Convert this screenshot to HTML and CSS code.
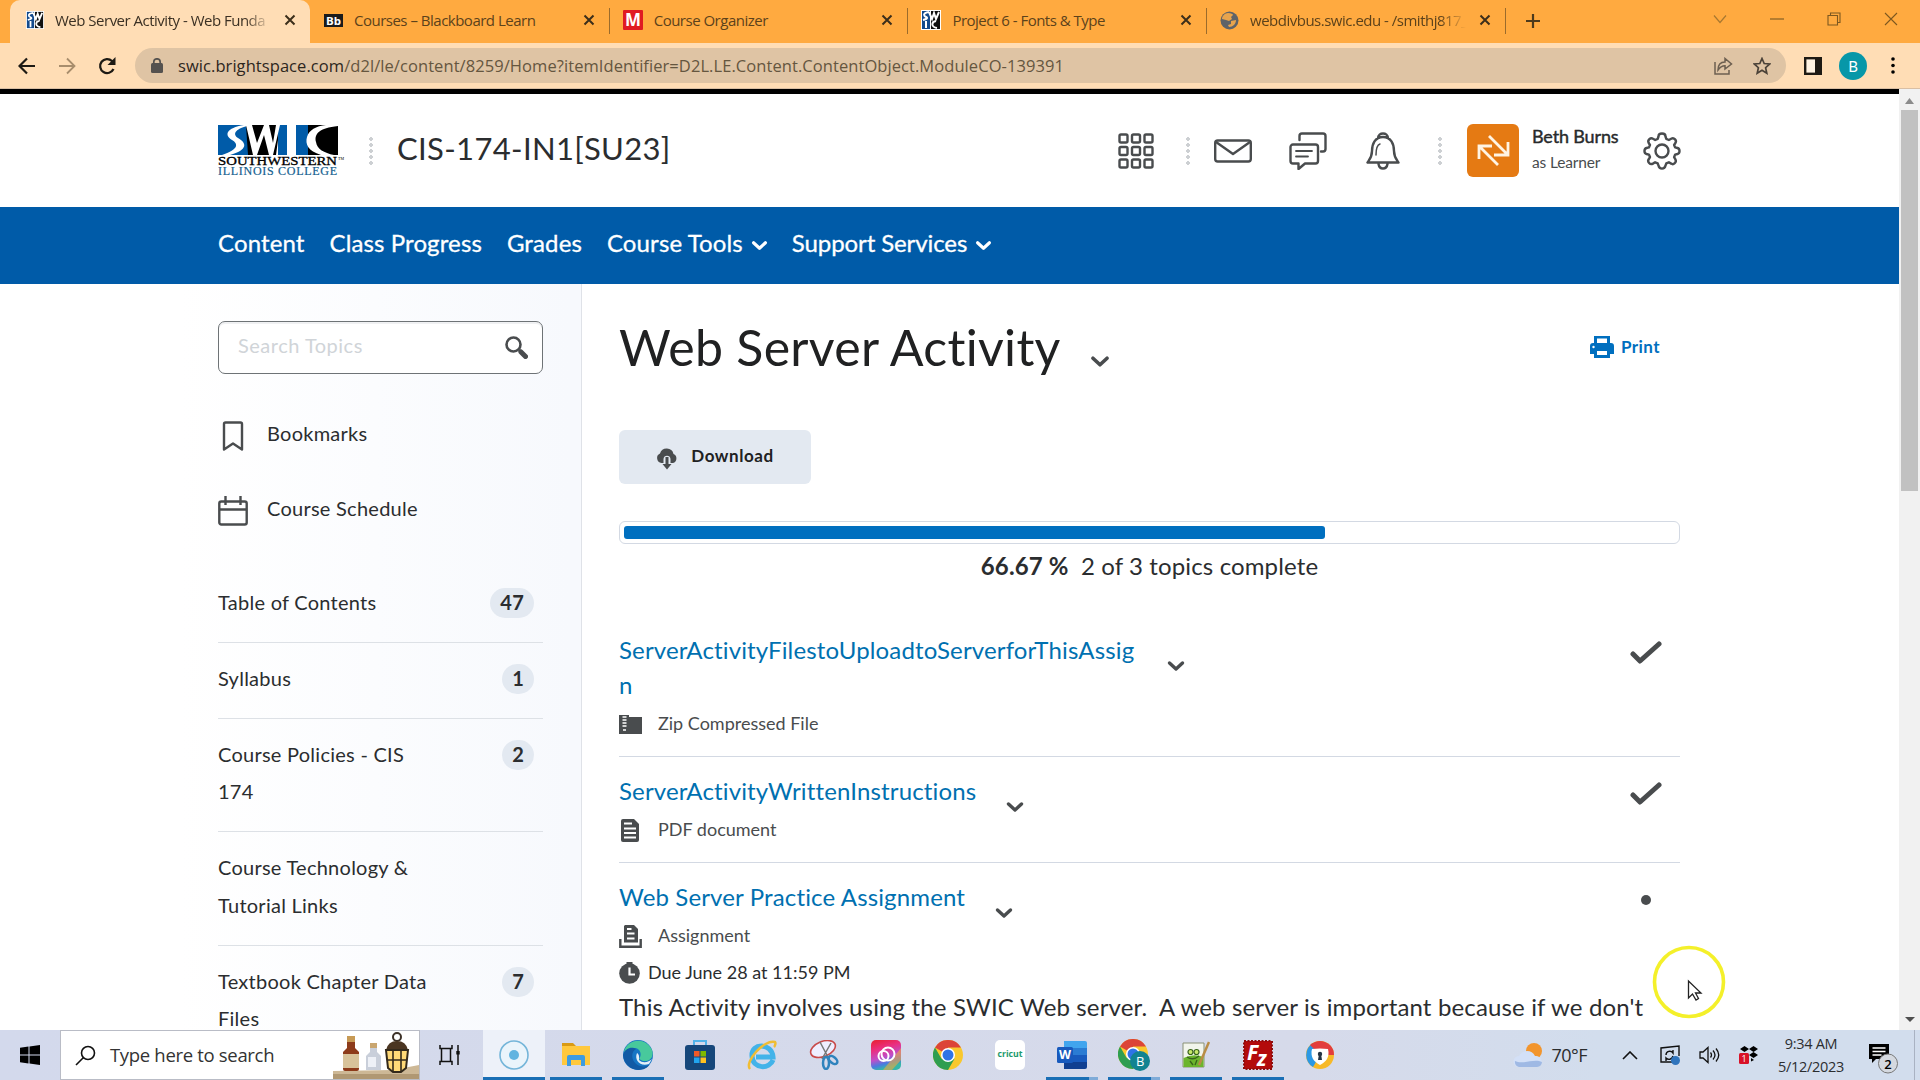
FILE: index.html
```html
<!DOCTYPE html>
<html lang="en">
<head>
    <meta charset="utf-8">
    <title>Web Server Activity - Web Fundamentals</title>
    <link rel="stylesheet" href="styles.css">
</head>
<body>

    <!-- shared shapes -->
    <svg class="defs" width="0" height="0">
        <symbol id="chev" viewBox="0 0 18 12"><path d="M2.5 3l6.500 6 6.500-6" fill="none" stroke="currentColor" stroke-width="3.400" stroke-linecap="round" stroke-linejoin="round"/></symbol>
        <symbol id="close" viewBox="0 0 12 12"><path d="M1.500 1.500l9 9M10.500 1.500l-9 9" stroke="currentColor" stroke-width="2"/></symbol>
        <symbol id="check" viewBox="0 0 32 24"><path d="M3 13l7 7L29 3" fill="none" stroke="#494c4e" stroke-width="5" stroke-linecap="round" stroke-linejoin="round"/></symbol>
        <symbol id="swicfav" viewBox="0 0 20 20">
            <rect width="20" height="20" fill="#fff"/>
            <path d="M1 1h8v18H1z" fill="#134a8c"/><path d="M10 1h9v18h-9z" fill="#111"/>
            <path d="M8 2C1 3 3 6 5 7s1 2-3 3M8 2l3 7 2-6 2 6 3-7M5 11v7M15 11c-5 1-5 6 1 7" fill="none" stroke="#fff" stroke-width="2"/>
        </symbol>
        <symbol id="chrome" viewBox="0 0 30 30">
            <circle cx="15" cy="15" r="15" fill="#f9c82d"/>
            <path d="M15 15L2 7.500A15 15 0 0 1 28 7.500H15z" fill="#dc4437"/>
            <path d="M15 15l6.500 3.750L15 30A15 15 0 0 1 2 7.500l6.500 11.250z" fill="#2e9e50"/>
            <circle cx="15" cy="15" r="7" fill="#fff"/><circle cx="15" cy="15" r="5.500" fill="#2f74e6"/>
        </symbol>
    </svg>

    <div class="tabstrip">
        <div class="tab active">
            <svg class="fav" width="18" height="20"><use href="#swicfav"/></svg>
            <span class="tab-title fade">Web Server Activity - Web Funda</span>
            <svg class="tab-x" width="12" height="12"><use href="#close"/></svg>
        </div>
        <div class="tab">
            <svg class="fav" width="19" height="13" viewBox="0 0 19 13"><rect width="19" height="13" fill="#1b1b1b"/><text x="2" y="10.500" font-size="11" font-weight="bold" fill="#fff" textLength="15" lengthAdjust="spacingAndGlyphs">Bb</text></svg>
            <span class="tab-title">Courses – Blackboard Learn</span>
            <svg class="tab-x" width="12" height="12"><use href="#close"/></svg>
        </div>
        <div class="tab">
            <svg class="fav" width="20" height="20" viewBox="0 0 20 20"><rect width="20" height="20" rx="1" fill="#e01b22"/><text x="2" y="16" font-size="17" font-weight="bold" fill="#fff" textLength="16" lengthAdjust="spacingAndGlyphs">M</text></svg>
            <span class="tab-title">Course Organizer</span>
            <svg class="tab-x" width="12" height="12"><use href="#close"/></svg>
        </div>
        <div class="tab">
            <svg class="fav" width="20" height="20"><use href="#swicfav"/></svg>
            <span class="tab-title">Project 6 - Fonts &amp; Type</span>
            <svg class="tab-x" width="12" height="12"><use href="#close"/></svg>
        </div>
        <div class="tab">
            <svg class="fav" width="19" height="19" viewBox="0 0 19 19"><circle cx="9.500" cy="9.500" r="9" fill="#5f6368"/><path d="M8 2c3 0 5 1 5 2l-2 2 1 2-3 2-3-1-4-1c0-3 3-6 6-6zM11 10l5-1c0 4-3 7-7 7l-1-2 3-1z" fill="#e8a44d"/></svg>
            <span class="tab-title fade">webdivbus.swic.edu - /smithj817_</span>
            <svg class="tab-x" width="12" height="12"><use href="#close"/></svg>
        </div>
        <svg class="new-tab" width="14" height="14" viewBox="0 0 14 14"><path d="M7 0v14M0 7h14" stroke="#4d3a1c" stroke-width="2.200"/></svg>
        <div class="win-controls">
            <svg width="14" height="10" viewBox="0 0 14 10"><path d="M1 1.500l6 7 6-7" fill="none" stroke="#a87830" stroke-width="1.200"/></svg>
            <svg width="14" height="10" viewBox="0 0 14 10"><path d="M0 5h14" stroke="#8d6528" stroke-width="1.300"/></svg>
            <svg width="14" height="14" viewBox="0 0 14 14"><path d="M1 3.500h9.500V13H1zM3.500 3.500V1H13v9.500h-2.500" fill="none" stroke="#7d5820" stroke-width="1.100"/></svg>
            <svg width="14" height="14" viewBox="0 0 14 14"><path d="M1 1l12 12M13 1L1 13" stroke="#7d5820" stroke-width="1.100"/></svg>
        </div>
    </div>

    <div class="toolbar">
        <svg width="18" height="18" viewBox="0 0 18 18"><path d="M17 9H2M9 1.500L1.500 9 9 16.500" fill="none" stroke="#1e1a14" stroke-width="2.200"/></svg>
        <svg width="18" height="18" viewBox="0 0 18 18"><path d="M1 9h15M9 1.500L16.500 9 9 16.500" fill="none" stroke="#a88d6c" stroke-width="1.800"/></svg>
        <svg width="18" height="18" viewBox="0 0 18 18"><path d="M15.500 12A7 7 0 1 1 14 4l2 2" fill="none" stroke="#1e1a14" stroke-width="2.300"/><path d="M17.500 0v8h-8z" fill="#1e1a14"/></svg>
        <div class="omnibox">
            <svg width="12" height="15" viewBox="0 0 12 15"><rect y="5" width="12" height="10" rx="1.500" fill="#55524f"/><path d="M2.800 6V4a3.200 3.200 0 0 1 6.400 0v2" fill="none" stroke="#55524f" stroke-width="1.700"/></svg>
            <span class="url"><b>swic.brightspace.com</b>/d2l/le/content/8259/Home?itemIdentifier=D2L.LE.Content.ContentObject.ModuleCO-139391</span>
            <svg class="share" width="20" height="18" viewBox="0 0 20 18"><path d="M2 5v12h14v-4M5 13c0-6 3-8 7-8V1.500L18.500 7 12 12V8.800C9 8.800 7 10 5 13z" fill="none" stroke="#6d5f50" stroke-width="1.500"/></svg>
            <svg width="18" height="18" viewBox="0 0 18 18"><path d="M9 1.500l2.200 5 5.500.5-4.100 3.700 1.200 5.500L9 13.300l-4.800 2.900 1.200-5.500L1.300 7l5.500-.5z" fill="none" stroke="#4b4238" stroke-width="1.700"/></svg>
        </div>
        <svg class="panel" width="18" height="18" viewBox="0 0 18 18"><rect x="1.200" y="1.200" width="15.600" height="15.600" fill="#fff3e3" stroke="#1e1a14" stroke-width="2.400"/><path d="M11 1h6v16h-6z" fill="#1e1a14"/></svg>
        <span class="profile">B</span>
        <svg class="kebab" width="4" height="17" viewBox="0 0 4 17"><circle cx="2" cy="2" r="1.800"/><circle cx="2" cy="8.500" r="1.800"/><circle cx="2" cy="15" r="1.800"/></svg>
    </div>

    <div class="viewport">
        <div class="page">
            <div class="topline"></div>
            <header class="site-header">
                <svg class="logo" width="128" height="52" viewBox="0 0 128 52">
                    <path d="M0 0h28l12 30H0z" fill="#005ba8"/>
                    <path d="M28 0h34l-4 30H30zM90 0h30v30H90z"/>
                    <path d="M60 0h9v30H60zM78 0h12v30H78z" fill="#005ba8"/>
                    <path d="M69 0h9v30h-9z" fill="#fff"/>
                    <path d="M26 0C8 3 6 10 14 15c7 4 6 10-10 15h8c18-5 17-12 8-17-6-4-3-10 14-13z" fill="#fff"/>
                    <path d="M28 0h6l5 18L46 0h5l4 18 3-18h4l-7 30h-4l-5-20-7 20h-4z" fill="#fff"/>
                    <path d="M120 1C101 3 96 9 98 17c1 7 8 11 18 13h-13C90 26 87 19 89 12 91 5 98 1 108 0h12z" fill="#fff"/>
                    <text x="0" y="39.500" font-size="12" class="serif" stroke="#000" stroke-width=".3" textLength="119" lengthAdjust="spacingAndGlyphs">SOUTHWESTERN</text>
                    <text x="120" y="34.500" font-size="4" class="serif">TM</text>
                    <text x="0" y="50" font-size="12" class="serif" fill="#14608f" stroke="#14608f" stroke-width=".2" textLength="119">ILLINOIS COLLEGE</text>
                </svg>
                <span class="dots d1"></span>
                <span class="course">CIS-174-IN1[SU23]</span>
                <div class="header-icons">
                    <svg class="i-grid" width="36" height="36" viewBox="0 0 36 36" fill="none" stroke="#494c4e" stroke-width="2.400">
                        <rect x="1.500" y="1.500" width="8" height="8" rx="1.500"/><rect x="14" y="1.500" width="8" height="8" rx="1.500"/><rect x="26.500" y="1.500" width="8" height="8" rx="1.500"/>
                        <rect x="1.500" y="14" width="8" height="8" rx="1.500"/><rect x="14" y="14" width="8" height="8" rx="1.500"/><rect x="26.500" y="14" width="8" height="8" rx="1.500"/>
                        <rect x="1.500" y="26.500" width="8" height="8" rx="1.500"/><rect x="14" y="26.500" width="8" height="8" rx="1.500"/><rect x="26.500" y="26.500" width="8" height="8" rx="1.500"/>
                    </svg>
                    <span class="dots d2"></span>
                    <svg class="i-mail" width="38" height="24" viewBox="0 0 38 24" fill="none" stroke="#494c4e" stroke-width="2.400" stroke-linejoin="round"><rect x="1.200" y="1.500" width="35.600" height="21" rx="2.500"/><path d="M2 3l17 12L36 3"/></svg>
                    <svg class="i-chat" width="38" height="38" viewBox="0 0 38 38" fill="none" stroke="#494c4e" stroke-width="2.400" stroke-linejoin="round" stroke-linecap="round"><path d="M10.500 8V4a2.500 2.500 0 0 1 2.500-2.500h21A2.500 2.500 0 0 1 36.500 4v13a2.500 2.500 0 0 1-2.500 2.500h-2"/><path d="M4 12.500h22.500A2.500 2.500 0 0 1 29 15v14a2.500 2.500 0 0 1-2.500 2.500H16L9.500 37v-5.500H4A2.500 2.500 0 0 1 1.500 29V15A2.500 2.500 0 0 1 4 12.500z"/><path d="M7 19h16M7 24.500h12" stroke-width="1.800"/></svg>
                    <svg class="i-bell" width="34" height="38" viewBox="0 0 34 38" fill="none" stroke="#494c4e" stroke-width="2.400" stroke-linejoin="round" stroke-linecap="round"><path d="M12 6c0-6 10-6 10 0M17 5C9 5 6 12 6 19c0 6-2 8-4.500 11.500h31C30 27 28 25 28 19c0-7-3-14-11-14zM12.500 32c1 6 8 6 9 0"/><path d="M14 12c-3 1-4 6-4 11" stroke-width="1.500"/></svg>
                    <span class="dots d3"></span>
                    <svg class="avatar" width="52" height="53" viewBox="0 0 52 53"><rect width="52" height="53" rx="6" fill="#e57a13"/><path d="M22 12l19 19M41 18v13H27M31 41L12 22M12 35V22h13" fill="none" stroke="#fff4e4" stroke-width="2.800"/></svg>
                    <div class="user"><span class="user-name">Beth Burns</span><span class="user-role">as Learner</span></div>
                    <svg class="i-gear" width="38" height="38" viewBox="0 0 38 38" fill="none" stroke="#494c4e" stroke-width="2.400" stroke-linejoin="round"><path d="M15.500 4.500Q15.500 1.500 19 1.500t3.500 3l.8 2.400 2.600 1.100 2.300-1.300c3-1.600 5.900 1.900 4.200 4.300L31.100 13l1 2.400 2.400.6c2.700.8 2.700 5.200 0 6l-2.400.6-1 2.600 1.300 2.200c1.600 2.900-1.900 5.900-4.300 4.200l-2.200-1.300-2.600 1.100-.8 2.200q-.6 3-3.500 3t-3.500-3l-.8-2.200-2.600-1.100-2.200 1.300c-2.900 1.600-5.900-1.900-4.200-4.300l1.300-2.200-1.100-2.500-2.400-.6c-2.700-.8-2.700-5.200 0-6l2.400-.6L7 13l-1.300-2c-1.600-2.900 1.900-5.900 4.300-4.300L12.200 8l2.500-1.100z"/><circle cx="19" cy="19" r="6.500"/></svg>
                </div>
            </header>

            <nav class="navbar">
                <a>Content</a>
                <a>Class Progress</a>
                <a>Grades</a>
                <a>Course Tools <svg width="17" height="11"><use href="#chev"/></svg></a>
                <a class="support">Support Services <svg width="17" height="11"><use href="#chev"/></svg></a>
            </nav>

            <div class="columns">
                <aside class="sidebar">
                    <div class="search">
                        <span>Search Topics</span>
                        <svg width="23" height="23" viewBox="0 0 23 23" fill="none" stroke="#494c4e"><circle cx="8.500" cy="8.500" r="7" stroke-width="2.600"/><path d="M14 14l2 2" stroke-width="3"/><path d="M16 16l4.500 4.500" stroke-width="5" stroke-linecap="round"/></svg>
                    </div>
                    <div class="side-link">
                        <svg width="30" height="30" viewBox="0 0 30 30" fill="none" stroke="#494c4e" stroke-width="2.400" stroke-linejoin="round"><path d="M6 3q0-1.500 1.500-1.500h15Q24 1.500 24 3v25.500l-9-6-9 6z"/></svg>
                        <span>Bookmarks</span>
                    </div>
                    <div class="side-link">
                        <svg width="30" height="30" viewBox="0 0 30 30" fill="none" stroke="#494c4e" stroke-width="2.400" stroke-linejoin="round"><rect x="1.300" y="5.500" width="27.400" height="23" rx="2"/><path d="M1 13.500h28M7.500 0v9M22.500 0v9"/></svg>
                        <span>Course Schedule</span>
                    </div>
                    <ul class="toc">
                        <li><span>Table of Contents</span><b>47</b></li>
                        <li><span>Syllabus</span><b>1</b></li>
                        <li><span>Course Policies - CIS<br>174</span><b>2</b></li>
                        <li><span>Course Technology &amp;<br>Tutorial Links</span></li>
                        <li><span>Textbook Chapter Data<br>Files</span><b>7</b></li>
                    </ul>
                </aside>

                <main class="content">
                    <div class="title-row">
                        <h1>Web Server Activity</h1>
                        <svg class="title-chev" width="20" height="13"><use href="#chev"/></svg>
                        <a class="print">
                            <svg width="24" height="22" viewBox="0 0 24 22"><path d="M4 0h16v8H4z" fill="#006fbf"/><path d="M7 2.500h10v5H7z" fill="#fff"/><path d="M3 7h18a3 3 0 0 1 3 3v8h-4v4H4v-4H0v-8a3 3 0 0 1 3-3z" fill="#006fbf"/><path d="M7 15h10v4H7z" fill="#fff"/><circle cx="3.500" cy="11" r="1.200" fill="#fff"/></svg>
                            <span>Print</span>
                        </a>
                    </div>
                    <button class="download">
                        <svg width="22" height="22" viewBox="0 0 22 22"><path d="M5.500 15A5 5 0 0 1 4 5.500 7 7 0 0 1 17.500 6 4.800 4.800 0 0 1 17 15z" fill="#494c4e"/><path d="M7.500 16V11c0-4.500 7-4.500 7 0v5" fill="#e3e9f1"/><path d="M11 9v9" stroke="#494c4e" stroke-width="3"/><path d="M6.500 16h9L11 21.500z" fill="#494c4e"/></svg>
                        <span>Download</span>
                    </button>
                    <div class="progress"><div class="progress-fill" style="width:66.67%"></div></div>
                    <p class="progress-text"><b>66.67 %</b> <span>2 of 3 topics complete</span></p>

                    <section class="topic">
                        <div class="topic-head">
                            <a>ServerActivityFilestoUploadtoServerforThisAssign</a>
                            <svg class="topic-chev" width="18" height="12"><use href="#chev"/></svg>
                            <svg class="done" width="32" height="24"><use href="#check"/></svg>
                        </div>
                        <div class="kind">
                            <svg width="23" height="19" viewBox="0 0 23 19"><path d="M0 0h10v2h13v17H0z" fill="#494c4e"/><path d="M3.500 2h4M3.500 5h4M3.500 8h4M3.500 11h4M4 15h3" stroke="#fff" stroke-width="1.600"/></svg>
                            <span>Zip Compressed File</span>
                        </div>
                    </section>
                    <section class="topic">
                        <div class="topic-head">
                            <a>ServerActivityWrittenInstructions</a>
                            <svg class="topic-chev" width="18" height="12"><use href="#chev"/></svg>
                            <svg class="done" width="32" height="24"><use href="#check"/></svg>
                        </div>
                        <div class="kind">
                            <svg width="23" height="23" viewBox="0 0 23 23"><path d="M4 0h11l5 5v16q0 2-2 2H4q-2 0-2-2V2q0-2 2-2z" fill="#494c4e"/><path d="M5 4.500h8M5 9.500h12M5 14h12M5 18.500h12" stroke="#fff" stroke-width="2"/></svg>
                            <span>PDF document</span>
                        </div>
                    </section>
                    <section class="topic">
                        <div class="topic-head">
                            <a>Web Server Practice Assignment</a>
                            <svg class="topic-chev" width="18" height="12"><use href="#chev"/></svg>
                            <svg class="done" width="32" height="24" viewBox="0 0 32 24"><circle cx="16" cy="12" r="5" fill="#494c4e"/></svg>
                        </div>
                        <div class="kind">
                            <svg width="23" height="23" viewBox="0 0 23 23"><path d="M1.300 14v7.700h20.400V14" fill="none" stroke="#494c4e" stroke-width="2.400"/><path d="M6 0h9l4 4v13.500H5V1z" fill="#494c4e"/><path d="M8 4h4.500M8 8.500h7.500M8 13.500h7.500" stroke="#fff" stroke-width="2.200"/></svg>
                            <span>Assignment</span>
                        </div>
                        <div class="due">
                            <svg width="21" height="22" viewBox="0 0 21 22"><circle cx="10.500" cy="11.500" r="10.300" fill="#494c4e"/><path d="M7.500 0h6v4h-6z" fill="#494c4e"/><path d="M10.500 5.500v7H16" fill="none" stroke="#fff" stroke-width="2.200"/></svg>
                            <span>Due June 28 at 11:59 PM</span>
                        </div>
                        <p class="desc">This Activity involves using the SWIC Web server.&nbsp; A web server is important because if we don't</p>
                    </section>
                </main>
            </div>
        </div>

        <div class="scrollbar">
            <svg width="9" height="6" viewBox="0 0 9 6"><path d="M0 6l4.500-6L9 6z" fill="#8b8b8b"/></svg>
            <div class="thumb"></div>
            <svg class="down" width="10" height="5" viewBox="0 0 10 5"><path d="M0 0h10L5 5z" fill="#505050"/></svg>
        </div>
    </div>

    <div class="taskbar">
        <div class="start"><svg width="20" height="20" viewBox="0 0 20 20"><path d="M0 2.800L8.500 1.600v8H0zM9.500 1.400L20 0v9.600H9.500zM0 10.400h8.500v8L0 17.200zM9.500 10.400H20V20L9.500 18.600z"/></svg></div>
        <div class="tb-search">
            <svg class="glass" width="21" height="21" viewBox="0 0 21 21"><circle cx="13" cy="8" r="6.500" fill="none" stroke="#111" stroke-width="1.600"/><path d="M8.500 12.500L1 20" stroke="#111" stroke-width="1.600"/></svg>
            <span>Type here to search</span>
            <svg class="deco" width="86" height="48" viewBox="0 0 86 48">
                <path d="M0 40l60-1 26-5v14H0z" fill="#cdb896"/><path d="M0 43h86v5H0z" fill="#b09873"/>
                <rect x="14" y="5" width="8" height="7" fill="#c79a55"/><path d="M14 11h8v6l4 4v17q0 2-2 2H12q-2 0-2-2V21l4-4z" fill="#8d3b1a"/><path d="M10 23h16v14H10z" fill="#d8c39a"/>
                <rect x="37" y="12" width="7" height="5" fill="#c9a670"/><path d="M37 17h7v4l4 4v14H33V25l4-4z" fill="#c9cfda"/><path d="M35 26h8v10h-8z" fill="#eef1f7"/>
                <circle cx="64" cy="6" r="4" fill="none" stroke="#3c3127" stroke-width="2"/><path d="M53 19q2-9 11-9t11 9z" fill="#4a3521"/><path d="M53 19h22l-2 18-5 4h-8l-5-4z" fill="#ffd977" stroke="#33291b" stroke-width="2"/><path d="M60 19v22M68 19v22M54 29h20" stroke="#33291b" stroke-width="1.600"/>
            </svg>
        </div>
        <div class="app taskview"><svg width="21" height="20" viewBox="0 0 21 20" fill="none" stroke="#111" stroke-width="1.500"><path d="M1 0v3.500h12V0M1 20v-3.500h12V20M2.500 3.500v13M11.500 3.500v13M19 0v20"/><path d="M17.300 6h3.400v3.500h-3.400z" fill="#111" stroke="none"/></svg></div>
        <div class="app current on"><svg width="30" height="30" viewBox="0 0 30 30"><circle cx="15" cy="15" r="14" fill="#eaf4fb" stroke="#74b5d9" stroke-width="1.600"/><circle cx="15" cy="15" r="5" fill="#62b4e0"/></svg></div>
        <div class="app on"><svg width="28" height="24" viewBox="0 0 28 24"><path d="M0 0h11l3 3h-14z" fill="#d99a14"/><path d="M0 3h28v19H0z" fill="#ffc83d"/><path d="M5 23v-9q0-2 2-2h14q2 0 2 2v9h-4v-6h-10v6z" fill="#3d9be0"/></svg></div>
        <div class="app on"><svg width="30" height="30" viewBox="0 0 30 30"><circle cx="15" cy="15" r="15" fill="#1675c4"/><path d="M1 12C3 0 22-5 29 10c2 6-1 12-9 11l-4-2c3-4 2-10-4-11-5 0-9 2-11 4z" fill="#48c99c"/><path d="M0 15C2 8 9 6 13 9c-6 3-5 14 4 17 4 1 8 0 10-2-7 11-26 6-27-9z" fill="#125aa5"/><path d="M14 13c3 2 2 6 2 7 4 4 10 2 13-1l-3 5c-9 3-15-4-12-11z" fill="#e3eef8"/></svg></div>
        <div class="app"><svg width="30" height="30" viewBox="0 0 30 30"><path d="M9 6V1h12v5" fill="none" stroke="#52b4ea" stroke-width="2"/><rect y="5" width="30" height="25" rx="3" fill="#16477a"/><path d="M9 11h5.500v5.500H9z" fill="#f05a28"/><path d="M15.500 11H21v5.500h-5.500z" fill="#7fba00"/><path d="M9 17.500h5.500V23H9z" fill="#22a5ef"/><path d="M15.500 17.500H21V23h-5.500z" fill="#ffc220"/></svg></div>
        <div class="app"><svg width="30" height="30" viewBox="0 0 30 30"><path d="M26 20c-3 9-20 10-21-4S25 3 26 17H9" fill="none" stroke="#43b3e9" stroke-width="5"/><path d="M3 29C-3 22 17-1 28 2c1 1 0 4-1 5" fill="none" stroke="#f0bd33" stroke-width="2.500"/></svg></div>
        <div class="app"><svg width="30" height="30" viewBox="0 0 30 30" fill="none"><ellipse cx="14" cy="9" rx="13" ry="7.500" transform="rotate(-22 14 9)" fill="#eef" stroke="#c94a4a" stroke-width="1.600"/><path d="M11 2l9 17M22 3L13 19" stroke="#777" stroke-width="1.500"/><ellipse cx="17" cy="23" rx="3" ry="6" stroke="#2f83bd" stroke-width="2.500"/><ellipse cx="24" cy="20" rx="3" ry="5" transform="rotate(-50 24 20)" stroke="#2f83bd" stroke-width="2.500"/></svg></div>
        <div class="app"><svg width="30" height="30" viewBox="0 0 30 30"><defs><linearGradient id="cc" x1="0" y1="0" x2=".3" y2="1"><stop offset="0" stop-color="#e8202d"/><stop offset=".35" stop-color="#ea2f80"/><stop offset=".65" stop-color="#c04fc8"/><stop offset=".85" stop-color="#4a7be0"/><stop offset="1" stop-color="#35b6a8"/></linearGradient></defs><rect width="30" height="30" rx="5" fill="url(#cc)"/><path d="M30 8v12l-9 10h-9z" fill="#f0a840" opacity=".6"/><circle cx="12.500" cy="16" r="5" fill="none" stroke="#fff" stroke-width="2"/><circle cx="17" cy="14" r="6.500" fill="none" stroke="#fff" stroke-width="2"/></svg></div>
        <div class="app"><svg width="30" height="30"><use href="#chrome"/></svg></div>
        <div class="app"><svg width="30" height="30" viewBox="0 0 30 30"><rect width="30" height="30" rx="5" fill="#fff"/><text x="2.500" y="17" font-size="9" font-weight="bold" fill="#1b9a6c" textLength="25" lengthAdjust="spacingAndGlyphs">cricut</text></svg></div>
        <div class="app on many"><svg width="30" height="28" viewBox="0 0 30 28"><path d="M7 0h21q2 0 2 2v5H7z" fill="#41a5ee"/><path d="M7 7h23v7H7z" fill="#2b7cd3"/><path d="M7 14h23v7H7z" fill="#185abd"/><path d="M7 21h23v5q0 2-2 2H7z" fill="#103f91"/><rect y="6" width="16" height="16" rx="1.500" fill="#185abd"/><text x="2" y="18" font-size="12" font-weight="bold" fill="#fff" textLength="12" lengthAdjust="spacingAndGlyphs">W</text></svg></div>
        <div class="app on many"><svg width="32" height="32" viewBox="0 0 32 32"><use href="#chrome" width="30" height="30"/><circle cx="22" cy="22" r="10" fill="#128391"/><text x="18" y="27" font-size="13" fill="#fff">B</text></svg></div>
        <div class="app on"><svg width="28" height="28" viewBox="0 0 28 28"><path d="M1 2h21v24H1z" fill="#f2f5ec" stroke="#8a9277"/><path d="M1.500 17q10-5 20-1v10h-20z" fill="#6cb52d"/><circle cx="8.500" cy="11" r="2.500" fill="#c9e86a" stroke="#39631c" stroke-width="1.200"/><circle cx="14.500" cy="11" r="2.500" fill="#c9e86a" stroke="#39631c" stroke-width="1.200"/><path d="M5 16q6 4 12-1M8 20l3 4M15 19l-2 5" fill="none" stroke="#39631c" stroke-width="1.300"/><path d="M27 1L17 24" stroke="#b98d45" stroke-width="2.500"/></svg></div>
        <div class="app on"><svg width="30" height="30" viewBox="0 0 30 30"><rect x="1" y="1" width="28" height="28" fill="#b30b0b" stroke="#8e0d0d" stroke-width="2" stroke-dasharray="2 1.500"/><text x="4" y="20" font-size="21" font-weight="bold" font-style="italic" fill="#fff">F</text><text x="14" y="26" font-size="21" font-weight="bold" font-style="italic" fill="#fff">z</text></svg></div>
        <div class="app"><svg width="28" height="28" viewBox="0 0 28 28"><circle cx="14" cy="14" r="14" fill="#f7b928"/><path d="M14 14L7 26A14 14 0 0 1 7 2z" fill="#2b98e5"/><path d="M14 14L4 4Q14-4 24 4q4 4 4 10z" fill="#e23d3d"/><path d="M6 8q8-1 16 0c2 8-2 13-8 16-6-3-10-8-8-16z" fill="#fff"/><circle cx="14" cy="13" r="2.200" fill="#234"/><path d="M13 13h2l1 6h-4z" fill="#234"/></svg></div>

        <div class="tray">
            <svg class="weather" width="30" height="25" viewBox="0 0 30 25"><circle cx="21" cy="8" r="8" fill="#f2952d"/><path d="M6 24a5.500 5.500 0 0 1 0-11 9 9 0 0 1 16 0 5.500 5.500 0 0 1 2 11z" fill="#d3e0f7"/><path d="M6 24a5.500 5.500 0 0 1-4-6c8 4 19-3 27 1a5.500 5.500 0 0 1-5 5z" fill="#9fb9e4"/></svg>
            <span class="temp">70°F</span>
            <svg class="up" width="16" height="9" viewBox="0 0 16 9"><path d="M1 8l7-7 7 7" fill="none" stroke="#111" stroke-width="1.600"/></svg>
            <svg class="sync" width="20" height="20" viewBox="0 0 20 20"><path d="M19 11V1L1 3v14h11" fill="none" stroke="#111" stroke-width="1.400"/><path d="M6 10c0-4 5-5 7-2V5M13 11c-1 4-5 4-7 2v3" fill="none" stroke="#111" stroke-width="1.400"/><circle cx="15.500" cy="15.500" r="4.500" fill="#2f74bd"/></svg>
            <svg class="sound" width="21" height="18" viewBox="0 0 21 18" fill="none" stroke="#111" stroke-width="1.300"><path d="M1 6v6h3l5 4.500V1.500L4 6zM11.500 6.500q2 2.500 0 5M14 4.500q4 4.500 0 9M17 2.500q5.500 6.500 0 13"/></svg>
            <svg class="dropbox" width="20" height="18" viewBox="0 0 20 18"><path d="M5.500 0l4.500 3-4.500 3L1 3zM14.500 0L19 3l-4.500 3L10 3zM14.500 6L19 9l-4.500 3L10 9zM12 12l3 2-3 1.500z"/><rect y="7" width="10" height="11" rx="1.500" fill="#d81228"/><text x="2.500" y="16" font-size="9" fill="#fff">1</text></svg>
            <div class="clock"><span>9:34 AM</span><span>5/12/2023</span></div>
            <svg class="notif" width="32" height="32" viewBox="0 0 32 32"><path d="M1 1h20v15H8l-4 4v-4H1z"/><path d="M4.500 5h13M4.500 8.500h13M4.500 12h9" stroke="#fff" stroke-width="1.300"/><circle cx="20" cy="20.500" r="9.500" fill="#d5d9e0" stroke="#777" stroke-width="1"/><text x="16.200" y="25.500" font-size="13" font-weight="600">2</text></svg>
            <span class="peek"></span>
        </div>
    </div>

    <!-- pointer with the click highlight -->
    <svg class="cursor" width="74" height="74" viewBox="0 0 74 74"><circle cx="37" cy="37" r="34.500" fill="none" stroke="#f4f02a" stroke-width="3.600"/><path d="M36.500 36v17l4-4 3.500 6 2.500-1.500-3-5.500h5.500z" fill="#fff" stroke="#222" stroke-width="1.300"/></svg>

</body>
</html>
```

FILE: styles.css
```css
* {
    box-sizing: border-box;
}

body {
    margin: 0;
    width: 1920px;
    height: 1080px;
    overflow: hidden;
    display: flex;
    flex-direction: column;
    font-family: Lato, sans-serif;
    color: #2b2d2f;
    background: #fff;
}

svg {
    flex: none;
    display: block;
}

.defs {
    position: absolute;
}

/* browser tabs */
.tabstrip {
    height: 43px;
    background: #ffaa40;
    display: flex;
    align-items: center;
    padding: 0 0 2px 10px;
    font-family: "Open Sans", sans-serif;
    font-size: 15px;
    color: #5c421b;
}

.tab {
    width: 298.700px;
    height: 26px;
    display: flex;
    align-items: center;
    padding: 0 14px 1px 13px;
    border-right: 1px solid #9b6b2b;
}

.tab.active {
    width: 300px;
    height: 43px;
    padding: 0 14px 3px 16px;
    margin: 2px 1px 0 0;
    border: 0;
    border-radius: 10px 10px 0 0;
    background: #ffddb5;
    color: #3b3023;
}

.tab-title {
    margin-left: 11px;
    flex: 1;
    overflow: hidden;
    white-space: nowrap;
    letter-spacing: -0.500px;
}

.fade {
    margin-right: 13px;
    -webkit-mask-image: linear-gradient(to right, #000 88%, transparent);
    mask-image: linear-gradient(to right, #000 88%, transparent);
}

.tab-x {
    color: #3c2e1a;
}

.new-tab {
    margin-left: 20px;
}

.win-controls {
    margin-left: auto;
    display: flex;
    align-items: center;
    gap: 43px;
    padding: 0 22px 4px 0;
}

/* address bar */
.toolbar {
    height: 46px;
    background: #ffddb5;
    border-bottom: 1px solid #d9bfa4;
    display: flex;
    align-items: center;
    padding: 0 20px 0 18px;
    gap: 22px;
}

.omnibox {
    width: 1651px;
    height: 35px;
    margin-left: -3px;
    border-radius: 18px;
    background: #dfc4a4;
    display: flex;
    align-items: center;
    padding: 0 15px 0 16px;
    font-family: "Open Sans", sans-serif;
    font-size: 16.500px;
    color: #65563f;
}

.url {
    margin-left: 15px;
    letter-spacing: 0.070px;
}

.url b {
    font-weight: 400;
    color: #2d261d;
}

.share {
    margin: 0 20px 0 auto;
}

.panel {
    margin-left: -4px;
}

.profile {
    width: 28px;
    height: 28px;
    margin-left: -5px;
    border-radius: 50%;
    background: #0797a8;
    color: #fff;
    font-size: 15px;
    line-height: 28px;
    text-align: center;
}

.kebab {
    margin-left: 2px;
}

/* page area */
.viewport {
    height: 941px;
    display: flex;
    overflow: hidden;
}

.page {
    width: 1899px;
    height: 941px;
    overflow: hidden;
}

.topline {
    height: 5px;
    background: #000;
}

.site-header {
    height: 113px;
    display: flex;
    align-items: center;
    padding: 0 218px;
}

.serif {
    font-family: "Liberation Serif", serif;
}

.dots {
    width: 4px;
    height: 30px;
    background: radial-gradient(circle, #cdd0d3 1.700px, transparent 2px) 0 0 / 4px 6px;
}

.d1 {
    margin: 0 24px 0 23px;
}

.course {
    padding-bottom: 5px;
    font-size: 31px;
    letter-spacing: 0.350px;
}

.header-icons {
    margin-left: auto;
    display: flex;
    align-items: center;
}

.d2 {
    margin: 0 24px 0 32px;
}

.i-chat {
    margin: 0 39px 0 37px;
}

.d3 {
    margin: 0 25px 0 38px;
}

.user {
    width: 98px;
    margin: 0 13px;
    display: flex;
    flex-direction: column;
    gap: 6px;
    padding-bottom: 6px;
}

.user-name {
    font-size: 18px;
    letter-spacing: -0.150px;
    -webkit-text-stroke: 0.400px #202122;
}

.user-role {
    font-size: 15.500px;
    letter-spacing: -0.150px;
    color: #494c4e;
}

.navbar {
    height: 77px;
    background: #005ba8;
    display: flex;
    align-items: center;
    padding: 0 218px 6px;
    gap: 25px;
    font-size: 24px;
    letter-spacing: 0.120px;
    color: #fff;
}

.navbar a {
    display: flex;
    align-items: center;
    gap: 8px;
    -webkit-text-stroke: 0.300px #fff;
}

.navbar .support {
    margin-left: -1px;
    letter-spacing: -0.100px;
}

.navbar svg {
    margin-top: 5px;
}

.columns {
    display: flex;
    height: 746px;
}

.sidebar {
    width: 582px;
    padding: 37px 38px 0 218px;
    border-right: 1px solid #dfe2e8;
    background: linear-gradient(to right, #fff 180px, #f7f9fd 570px);
}

.search {
    height: 53px;
    border: 1px solid #6e7376;
    border-radius: 7px;
    background: #fff;
    box-shadow: inset 0 2px 0 #f0f1f3;
    display: flex;
    align-items: center;
    justify-content: space-between;
    padding: 0 14px 0 19px;
    font-size: 20px;
    letter-spacing: 0.500px;
    color: #d0d4d8;
}

.search span {
    padding-bottom: 5px;
}

.side-link {
    height: 75px;
    display: flex;
    align-items: center;
    gap: 19px;
    font-size: 20px;
    letter-spacing: 0.260px;
}

.side-link span {
    padding-bottom: 6px;
}

.search + .side-link {
    margin-top: 24px;
}

.toc {
    list-style: none;
    margin: 17px 0 0;
    padding: 0;
    font-size: 20px;
    line-height: 37.500px;
    letter-spacing: 0.260px;
}

.toc li {
    display: flex;
    justify-content: space-between;
    align-items: flex-start;
    padding: 17px 9px 20.500px 0;
    border-bottom: 1px solid #dde1e6;
}

.toc li:first-child {
    padding: 19px 9px 20px 0;
}

.toc b {
    min-width: 30px;
    height: 30px;
    margin-top: 4px;
    padding: 0 10px;
    border-radius: 15px;
    background: #e3e9f1;
    line-height: 29px;
    text-align: center;
}

/* main column */
.content {
    width: 1098px;
    padding: 30px 0 0 37px;
}

.title-row {
    height: 68px;
    display: flex;
    align-items: center;
}

h1 {
    margin: 0;
    padding-bottom: 2px;
    font-size: 50px;
    font-weight: 400;
    letter-spacing: 0.300px;
    color: #202122;
}

.title-chev {
    margin: 26px 0 0 29px;
    color: #494c4e;
}

.print {
    margin: 0 20px 2px auto;
    display: flex;
    align-items: center;
    gap: 7px;
    font-size: 17px;
    font-weight: 700;
    letter-spacing: 0.450px;
    color: #006fbf;
}

.print span {
    padding-bottom: 2px;
}

.download {
    width: 192px;
    height: 54px;
    margin: 48px 0 0;
    border: 0;
    border-radius: 6px;
    background: #e3e9f1;
    display: flex;
    align-items: center;
    justify-content: center;
    gap: 13px;
    font: 700 17px Lato, sans-serif;
    letter-spacing: 0.550px;
    color: #202122;
}

.download svg {
    margin-top: 4px;
}

.download span {
    padding-bottom: 4px;
}

.progress {
    width: 1061px;
    height: 23px;
    margin-top: 37px;
    padding: 4px;
    border: 1px solid #d3d9e3;
    border-radius: 6px;
}

.progress-fill {
    height: 13px;
    border-radius: 3px;
    background: #006fbf;
}

.progress-text {
    margin: 7px 0 51px;
    font-size: 24px;
    line-height: 30px;
    letter-spacing: 0.130px;
    text-align: center;
}

.progress-text span {
    margin-left: 6px;
}

.topic {
    border-bottom: 1px solid #d3d9e3;
    padding-bottom: 13px;
    margin-bottom: 16px;
}

.topic-head {
    display: flex;
    align-items: flex-start;
    font-size: 24px;
    line-height: 35px;
    letter-spacing: 0.140px;
    color: #0070b0;
}

.topic-head a {
    max-width: 518px;
    word-break: break-all;
}

.topic-chev {
    margin: 28px 0 -5px 30px;
    color: #494c4e;
}

.done {
    margin: 9px 18px 0 auto;
}

.kind {
    height: 41px;
    display: flex;
    align-items: center;
    gap: 16px;
    padding-top: 3px;
    font-size: 18px;
    color: #494c4e;
}

.kind span,
.due span {
    padding-bottom: 2px;
}

.due {
    height: 36px;
    display: flex;
    align-items: center;
    gap: 8px;
    font-size: 18px;
}

.desc {
    margin: 0;
    font-size: 24px;
    line-height: 32px;
    letter-spacing: 0.145px;
    white-space: nowrap;
}

.scrollbar {
    width: 21px;
    background: #f1f1f1;
    display: flex;
    flex-direction: column;
    align-items: center;
    padding: 9px 1px 8px;
}

.thumb {
    width: 17px;
    height: 381px;
    margin-top: 6px;
    background: #c1c1c1;
}

.down {
    margin-top: auto;
}

/* windows taskbar */
.taskbar {
    height: 50px;
    background: linear-gradient(to right, #d3d9ec 0, #d6daea 1300px, #d2dded 1600px);
    display: flex;
    align-items: center;
    font-family: "Open Sans", sans-serif;
}

.start {
    width: 60px;
    display: flex;
    justify-content: center;
}

.tb-search {
    width: 360px;
    height: 50px;
    border: 1px solid #b9bcc6;
    background: #fff;
    display: flex;
    align-items: center;
    font-size: 18.500px;
    letter-spacing: -0.320px;
    color: #333;
}

.tb-search span {
    padding-bottom: 2px;
}

.glass {
    margin: 0 14px;
}

.deco {
    margin-left: auto;
}

.app {
    width: 62px;
    height: 50px;
    display: flex;
    align-items: center;
    justify-content: center;
    position: relative;
}

.taskview {
    width: 63px;
    padding-right: 4px;
}

.current {
    background: #edf1f9;
}

/* running-app marker */
.on::after {
    content: "";
    position: absolute;
    left: 5px;
    right: 5px;
    bottom: 0;
    height: 3px;
    background: #1a6fb5;
}

.current::after {
    left: 0;
    right: 0;
}

.many::after {
    background: linear-gradient(to right, #1a6fb5 82%, #7fabd8 82%);
}

.tray {
    margin-left: auto;
    height: 50px;
    display: flex;
    align-items: center;
}

.temp {
    margin: 0 35px 0 8px;
    font-size: 18px;
    letter-spacing: -0.500px;
}

.sync {
    margin: 0 19px 0 22px;
}

.dropbox {
    margin-left: 19px;
}

.clock {
    width: 80px;
    margin: 0 17px 0 12px;
    display: flex;
    flex-direction: column;
    align-items: center;
    font-size: 14.500px;
    line-height: 23px;
    letter-spacing: -0.300px;
    white-space: nowrap;
}

.notif {
    margin-top: 8px;
}

.peek {
    width: 1px;
    height: 50px;
    margin: 0 5px 0 14px;
    background: #a9b2c2;
}

.cursor {
    position: absolute;
    left: 1652px;
    top: 945px;
}
```
